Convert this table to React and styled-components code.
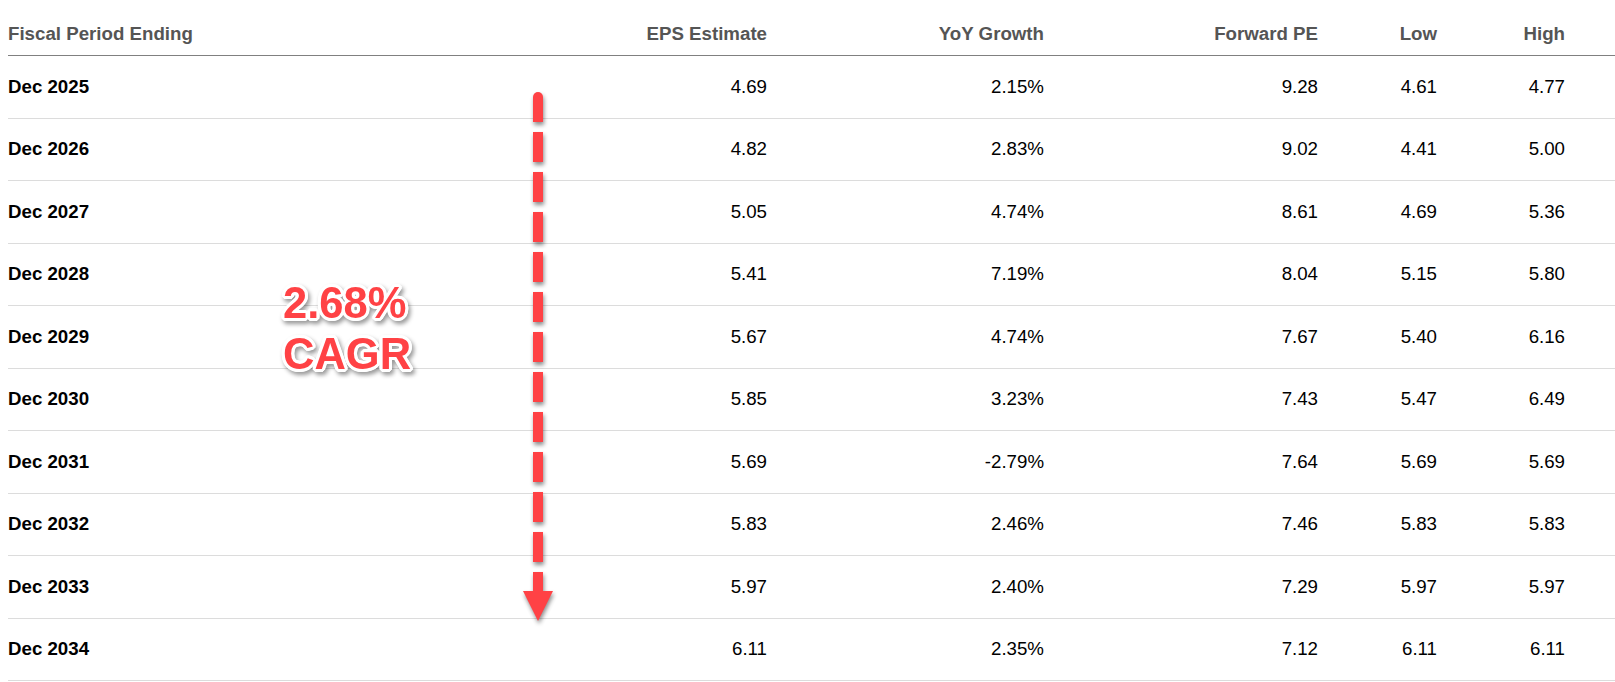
import React from "react";
import styled, { createGlobalStyle } from "styled-components";

const GlobalStyle = createGlobalStyle`
  html, body { margin: 0; padding: 0; background: #fff; }
  body { font-family: "Liberation Sans", Arial, sans-serif; overflow: hidden; }
`;

const Page = styled.div`
  position: relative;
  width: 1615px;
  height: 682px;
  padding-left: 8px;
  box-sizing: border-box;
  overflow: hidden;
`;

const Table = styled.div`
  display: flex;
  flex-direction: column;
  width: 1607px;
`;

const Row = styled.div`
  display: grid;
  grid-template-columns: 592px 167px 277px 274px 119px 128px;
  padding-right: 50px;
  box-sizing: border-box;
  height: ${(p) => (p.$head ? "56px" : "62.5px")};
  align-items: ${(p) => (p.$head ? "start" : "center")};
  padding-top: ${(p) => (p.$head ? "23px" : "0")};
  border-bottom: 1px solid ${(p) => (p.$head ? "#808080" : "#dcdcdc")};
`;

const Cell = styled.div`
  font-size: 18.7px;
  line-height: 22px;
  white-space: nowrap;
  text-align: ${(p) => (p.$left ? "left" : "right")};
  font-weight: ${(p) => (p.$head || p.$left ? 700 : 400)};
  color: ${(p) => (p.$head ? "#555" : "#000")};
`;

const Callout = styled.div`
  position: absolute;
  left: 283px;
  top: 278px;
  font-family: "Liberation Sans", Arial, sans-serif;
  font-weight: 700;
  font-size: 43.5px;
  line-height: 51px;
  color: #ff4245;
  white-space: nowrap;
  filter: drop-shadow(2px 3px 2px rgba(0, 0, 0, 0.4));
  text-shadow:
    -3px 0 0 #fff, 3px 0 0 #fff, 0 -3px 0 #fff, 0 3px 0 #fff,
    -2px -2px 0 #fff, 2px -2px 0 #fff, -2px 2px 0 #fff, 2px 2px 0 #fff,
    -3px -1px 0 #fff, 3px -1px 0 #fff, -3px 1px 0 #fff, 3px 1px 0 #fff,
    -1px -3px 0 #fff, 1px -3px 0 #fff, -1px 3px 0 #fff, 1px 3px 0 #fff;
`;

const ArrowSvg = styled.svg`
  position: absolute;
  left: 518px;
  top: 80px;
  filter: drop-shadow(1px 3px 2px rgba(0, 0, 0, 0.45));
`;

const RED = "#ff4245";

function DashedArrow() {
  const dashes = [];
  for (let k = 1; k < 12; k++) {
    dashes.push(<rect key={k} x="15" y={12 + 40 * k} width="10" height="30" fill={RED} />);
  }
  return (
    <ArrowSvg width="40" height="560" viewBox="0 0 40 560">
      <path d="M15 42 V17 A5 5 0 0 1 25 17 V42 Z" fill={RED} />
      {dashes}
      <rect x="15" y="492" width="10" height="20" fill={RED} />
      <polygon points="5,511 35,511 20,541" fill={RED} />
    </ArrowSvg>
  );
}

const data = [
  ["Dec 2025", "4.69", "2.15%", "9.28", "4.61", "4.77"],
  ["Dec 2026", "4.82", "2.83%", "9.02", "4.41", "5.00"],
  ["Dec 2027", "5.05", "4.74%", "8.61", "4.69", "5.36"],
  ["Dec 2028", "5.41", "7.19%", "8.04", "5.15", "5.80"],
  ["Dec 2029", "5.67", "4.74%", "7.67", "5.40", "6.16"],
  ["Dec 2030", "5.85", "3.23%", "7.43", "5.47", "6.49"],
  ["Dec 2031", "5.69", "-2.79%", "7.64", "5.69", "5.69"],
  ["Dec 2032", "5.83", "2.46%", "7.46", "5.83", "5.83"],
  ["Dec 2033", "5.97", "2.40%", "7.29", "5.97", "5.97"],
  ["Dec 2034", "6.11", "2.35%", "7.12", "6.11", "6.11"],
];

const headers = ["Fiscal Period Ending", "EPS Estimate", "YoY Growth", "Forward PE", "Low", "High"];

export default function App() {
  return (
    <>
      <GlobalStyle />
      <Page>
        <Table>
          <Row $head>
            {headers.map((h, i) => (
              <Cell key={h} $head $left={i === 0}>
                {h}
              </Cell>
            ))}
          </Row>
          {data.map((r) => (
            <Row key={r[0]}>
              {r.map((v, i) => (
                <Cell key={i} $left={i === 0}>
                  {v}
                </Cell>
              ))}
            </Row>
          ))}
        </Table>
        <Callout>
          2.68%
          <br />
          CAGR
        </Callout>
        <DashedArrow />
      </Page>
    </>
  );
}
